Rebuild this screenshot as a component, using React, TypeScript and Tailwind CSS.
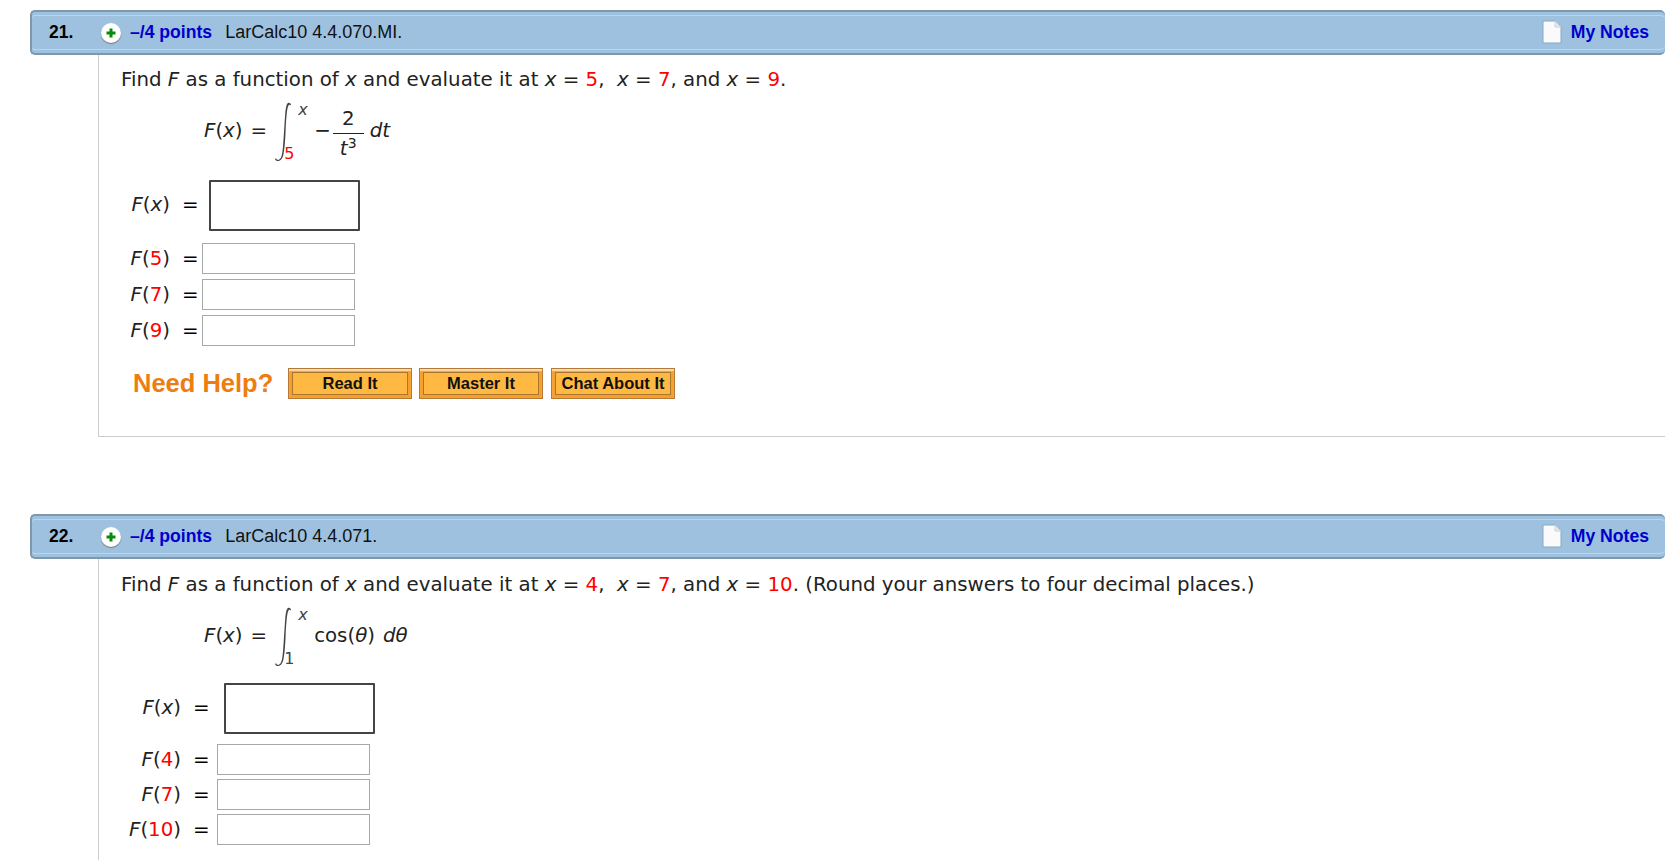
import type { ReactNode } from "react";

const verdana = "font-['DejaVu_Sans','Noto_Sans',sans-serif]";
const arial = "font-['Liberation_Sans',Arial,sans-serif]";

function Red({ children }: { children: ReactNode }) {
  return <span className="not-italic text-[#ff0000]">{children}</span>;
}

function V({ children }: { children: ReactNode }) {
  return <i>{children}</i>;
}

function IntegralSign() {
  return (
    <svg width="26" height="64" viewBox="0 0 26 64" className="-ml-[4px] shrink-0">
      <path
        d="M23 5.500c-.6-1.400-1.800-2.300-3-1.500-1.600 1-2.300 5-2.800 11-.7 9-1.300 21-2 30-.4 5-.8 10-2 13-.9 2-2.300 3.200-3.700 2.800-.8-.2-1.300-.8-1.500-1.500l-1 .6c.5 1.300 1.700 2.300 3.300 2.100 2.900-.3 4.400-3.200 5.200-7 1-4.800 1.700-13 2.100-23 .4-8.500.9-17 1.800-22 .4-2.300 1-4 1.900-4.300.8-.3 1.300.4 1.500 1z"
        fill="#444"
      />
    </svg>
  );
}

function Header({ num, code }: { num: number; code: string }) {
  return (
    <div className="flex h-[45px] items-center rounded-[5px] border-y-2 border-l-2 border-[#7f97ab] bg-[#9dc1df] pl-[17px] pr-[16px] shadow-[inset_0_3px_0_#9dc1df,inset_0_4px_0_#bcd5ea,inset_0_-3px_0_#9dc1df,inset_0_-4px_0_#bcd5ea]">
      <span className={`${arial} w-[52px] text-[17.500px] font-bold text-black`}>{num}.</span>
      <span className="flex h-[20px] w-[20px] items-center justify-center rounded-full bg-white shadow-[0_1px_1px_#777]">
        <svg width="12" height="12" viewBox="0 0 12 12">
          <path d="M6 1.500v9M1.500 6h9" stroke="#0a8a0a" strokeWidth="3" />
        </svg>
      </span>
      <span className={`${arial} ml-[9px] text-[17.600px] font-bold text-[#0000cc]`}>–/4 points</span>
      <span className={`${arial} ml-[13px] text-[18px] text-[#111]`}>{code}</span>
      <span className="ml-auto flex items-center">
        <svg width="20" height="24" viewBox="0 0 20 24">
          <path d="M1 1h12l6 6v16H1z" fill="#fafafa" stroke="#86a8c4" />
          <path d="M13 1v6h6" fill="#e8e8e8" stroke="#c9d3dc" />
        </svg>
        <span className={`${arial} ml-[9px] text-[17.600px] font-bold text-[#0000cc]`}>My Notes</span>
      </span>
    </div>
  );
}

function Formula({ lower, lowerRed, children }: { lower: string; lowerRed?: boolean; children: ReactNode }) {
  return (
    <div className="mt-[9px] flex h-[62px] items-center pl-[83px] text-[19.800px] text-[#222]">
      <span>
        <V>F</V>(<V>x</V>)
      </span>
      <span className="ml-[8px] mr-[5px]">=</span>
      <span className="relative h-[64px] w-[42px]">
        <IntegralSign />
        <i className="absolute left-[26px] top-[-1px] text-[16px] text-[#444]">x</i>
        <span className={`absolute bottom-[-3px] left-[12px] text-[16px] ${lowerRed ? "text-[#ff0000]" : "text-[#444]"}`}>{lower}</span>
      </span>
      {children}
    </div>
  );
}

function AnswerRow({ arg, labelWidth, big, inputGap }: { arg: ReactNode; labelWidth: string; big?: boolean; inputGap: string }) {
  return (
    <div className={`flex items-center text-[19.800px] text-[#222] ${big ? "h-[52px]" : "h-[31px]"}`}>
      <span className={`${labelWidth} whitespace-nowrap text-right`}>
        <V>F</V>({arg})
      </span>
      <span className="ml-[12px] w-[15px] text-black">=</span>
      <span className={`${inputGap} flex`}>
        {big ? (
          <span className="ml-[7px] h-[51px] w-[151px] rounded-[1px] border-2 border-[#444] bg-white" />
        ) : (
          <span className="h-[31px] w-[153px] border border-[#a8a8a8] bg-white" />
        )}
      </span>
    </div>
  );
}

function HelpButton({ label }: { label: string }) {
  return (
    <span className="flex h-[31px] w-[124px] items-stretch border border-[#b57a38] bg-[#f79e2d] p-[3px] shadow-[inset_0_2px_1px_#fbdcae]">
      <span className={`${arial} flex flex-1 items-center justify-center whitespace-nowrap border border-[#a9772f] bg-[#ffb942] text-[16.500px] font-bold text-[#111]`}>
        {label}
      </span>
    </span>
  );
}

export default function App() {
  return (
    <div className={`${verdana} h-[860px] w-[1665px] overflow-hidden bg-white pl-[30px] pt-[10px]`}>
      {/* question 21 */}
      <Header num={21} code="LarCalc10 4.4.070.MI." />
      <div className="ml-[68px] h-[382px] border-b border-l border-[#cccccc] pl-[22px] pt-[14px]">
        <p className="text-[19.800px] leading-[22px] text-[#222]">
          Find <V>F</V> as a function of <V>x</V> and evaluate it at <V>x</V> = <Red>5</Red>,&nbsp; <V>x</V> = <Red>7</Red>, and <V>x</V> = <Red>9</Red>.
        </p>
        <Formula lower="5" lowerRed>
          <span>−</span>
          <span className="ml-[2px] mt-[5px] flex flex-col items-center leading-[22px]">
            <span className="w-[31px] border-b border-[#222] pb-[3px] text-center">2</span>
            <i className="mt-[4px]">
              t<sup className="not-italic text-[14px]">3</sup>
            </i>
          </span>
          <i className="ml-[6px]">dt</i>
        </Formula>
        <div className="mt-[17px] pl-[9px]">
          <AnswerRow big arg={<V>x</V>} labelWidth="w-[40px]" inputGap="ml-[5px]" />
          <div className="mt-[12px] flex flex-col gap-[5px]">
            <AnswerRow arg={<Red>5</Red>} labelWidth="w-[40px]" inputGap="ml-[5px]" />
            <AnswerRow arg={<Red>7</Red>} labelWidth="w-[40px]" inputGap="ml-[5px]" />
            <AnswerRow arg={<Red>9</Red>} labelWidth="w-[40px]" inputGap="ml-[5px]" />
          </div>
        </div>
        <div className="mt-[18px] flex items-center pl-[12px]">
          <span className={`${arial} w-[155px] text-[25.500px] font-bold text-[#ee7d11]`}>Need Help?</span>
          <span className="flex gap-[7px]">
            <HelpButton label="Read It" />
            <HelpButton label="Master It" />
            <span className="ml-[1px]">
              <HelpButton label="Chat About It" />
            </span>
          </span>
        </div>
      </div>

      {/* question 22 */}
      <div className="mt-[77px]">
        <Header num={22} code="LarCalc10 4.4.071." />
      </div>
      <div className="ml-[68px] h-[310px] border-l border-[#cccccc] pl-[22px] pt-[15px]">
        <p className="text-[19.800px] leading-[22px] text-[#222]">
          Find <V>F</V> as a function of <V>x</V> and evaluate it at <V>x</V> = <Red>4</Red>,&nbsp; <V>x</V> = <Red>7</Red>, and <V>x</V> = <Red>10</Red>. (Round your answers to four decimal places.)
        </p>
        <Formula lower="1">
          <span>cos(<V>θ</V>)</span>
          <i className="ml-[8px]">dθ</i>
        </Formula>
        <div className="mt-[15px] pl-[8px]">
          <AnswerRow big arg={<V>x</V>} labelWidth="w-[52px]" inputGap="ml-[9px]" />
          <div className="mt-[10px] flex flex-col gap-[4px]">
            <AnswerRow arg={<Red>4</Red>} labelWidth="w-[52px]" inputGap="ml-[9px]" />
            <AnswerRow arg={<Red>7</Red>} labelWidth="w-[52px]" inputGap="ml-[9px]" />
            <AnswerRow arg={<Red>10</Red>} labelWidth="w-[52px]" inputGap="ml-[9px]" />
          </div>
        </div>
      </div>
    </div>
  );
}
